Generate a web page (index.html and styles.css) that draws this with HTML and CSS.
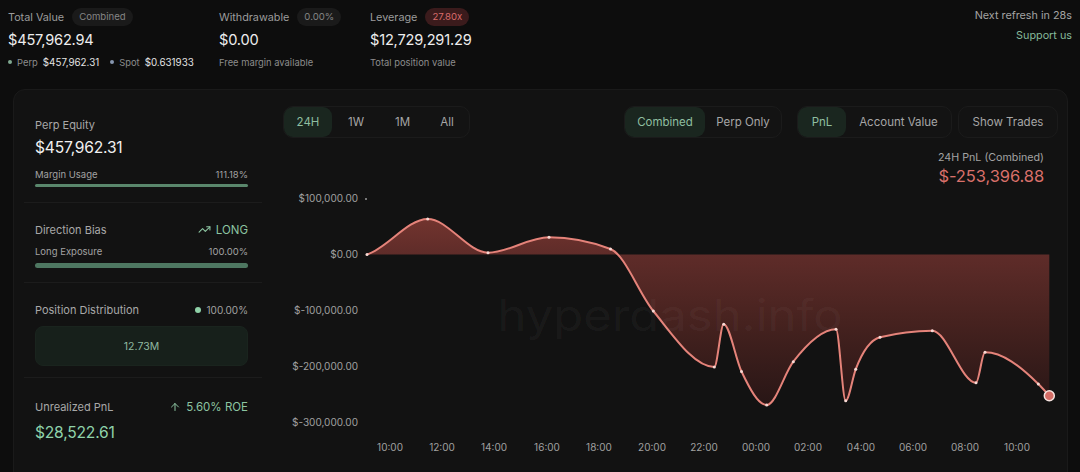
FILE: index.html
```html
<!DOCTYPE html>
<html lang="en">
<head>
<meta charset="utf-8">
<title>Hyperdash</title>
<link rel="stylesheet" href="styles.css">
</head>
<body>
<header class="top">
  <div class="stats">
    <div class="stat stat-total">
      <div class="stat-head"><span class="label">Total Value</span><span class="badge">Combined</span></div>
      <div class="value">$457,962.94</div>
      <div class="sub">
        <span class="dot dot-green"></span><span class="muted">Perp</span><span class="subval">$457,962.31</span>
        <span class="dot dot-blue"></span><span class="muted">Spot</span><span class="subval">$0.631933</span>
      </div>
    </div>
    <div class="stat stat-withdraw">
      <div class="stat-head"><span class="label">Withdrawable</span><span class="badge">0.00%</span></div>
      <div class="value">$0.00</div>
      <div class="sub"><span class="muted">Free margin available</span></div>
    </div>
    <div class="stat">
      <div class="stat-head"><span class="label">Leverage</span><span class="badge badge-red">27.80x</span></div>
      <div class="value">$12,729,291.29</div>
      <div class="sub"><span class="muted">Total position value</span></div>
    </div>
  </div>
  <div class="refresh">
    <div class="refresh-text">Next refresh in 28s</div>
    <div class="support">Support us</div>
  </div>
</header>

<main class="card">
  <aside class="side">
    <section class="sec sec-equity">
      <div class="row"><span class="sec-label">Perp Equity</span></div>
      <div class="big">$457,962.31</div>
      <div class="row small-row"><span>Margin Usage</span><span>111.18%</span></div>
      <div class="bar bar-thin"></div>
    </section>
    <section class="sec sec-bias">
      <div class="row"><span class="sec-label">Direction Bias</span>
        <span class="long">
          <svg class="ic" viewBox="0 0 24 24" width="13" height="13"><polyline points="22 7 13.5 15.5 8.5 10.5 2 17"/><polyline points="16 7 22 7 22 13"/></svg>
          LONG
        </span>
      </div>
      <div class="row small-row"><span>Long Exposure</span><span>100.00%</span></div>
      <div class="bar bar-thick"></div>
    </section>
    <section class="sec sec-dist">
      <div class="row"><span class="sec-label">Position Distribution</span>
        <span class="pct"><span class="pdot"></span>100.00%</span>
      </div>
      <div class="distbox">12.73M</div>
    </section>
    <section class="sec sec-upnl">
      <div class="row"><span class="sec-label">Unrealized PnL</span>
        <span class="roe">
          <svg class="ic" viewBox="0 0 24 24" width="12" height="12"><path d="M12 19V5"/><path d="M5 12l7-7 7 7"/></svg>
          5.60% ROE
        </span>
      </div>
      <div class="big green">$28,522.61</div>
    </section>
  </aside>

  <section class="chart-col">
    <div class="controls">
      <div class="seg">
        <span class="btn active b-24h">24H</span>
        <span class="btn b-1w">1W</span>
        <span class="btn b-1m">1M</span>
        <span class="btn b-all">All</span>
      </div>
      <div class="spacer"></div>
      <div class="seg">
        <span class="btn active b-comb">Combined</span>
        <span class="btn b-perp">Perp Only</span>
      </div>
      <div class="seg seg-mode">
        <span class="btn active b-pnl">PnL</span>
        <span class="btn b-acct">Account Value</span>
      </div>
      <div class="seg seg-trades">
        <span class="btn b-trades">Show Trades</span>
      </div>
    </div>
    <div class="pnl-head">
      <div class="pnl-label">24H PnL (Combined)</div>
      <div class="pnl-value">$-253,396.88</div>
    </div>
    <svg class="chart" width="775" height="283" viewBox="283 187 775 283">
      <defs>
        <linearGradient id="fillGrad" gradientUnits="userSpaceOnUse" x1="0" y1="215" x2="0" y2="410">
          <stop offset="0" stop-color="#74352f"/>
          <stop offset="0.2" stop-color="#5f2c29"/>
          <stop offset="0.55" stop-color="#46221f"/>
          <stop offset="1" stop-color="#261515"/>
        </linearGradient>
      </defs>
      <g class="ylabels">
        <text x="358" y="201.5">$100,000.00</text>
        <text x="358" y="257.5">$0.00</text>
        <text x="358" y="313.5">$-100,000.00</text>
        <text x="358" y="369.5">$-200,000.00</text>
        <text x="358" y="425.5">$-300,000.00</text>
      </g>
      <circle cx="366" cy="199" r="1" fill="#9a9a9a"/>
      <path class="area" d="M367,254.5 C387.2,248.4 407.5,219 427.7,219 C447.8,219 467.9,252.7 488,252.7 C508.3,252.7 528.7,237.3 549,237.3 C569.5,237.3 590,241.2 610.5,249 C624.8,254.4 639,293.4 653.3,311 C673.6,336 694,367 714.3,367 C717.4,367 720.6,324.3 723.7,324.3 C729.6,324.3 735.6,359 741.5,371.5 C749.9,389.1 758.3,405 766.7,405 C775.6,405 784.4,373.2 793.3,361.7 C807.5,343.3 821.8,329.3 836,329.3 C839.2,329.3 842.5,400.7 845.7,400.7 C849,400.7 852.4,378 855.7,369.3 C863.8,348.2 871.9,339.3 880,337.3 C897.4,332.9 914.9,330.7 932.3,330.7 C946.9,330.7 961.4,382.7 976,382.7 C979,382.7 982,352.3 985,352.3 C1002.8,352.3 1020.5,366.5 1038.3,384 C1042,387.6 1045.6,391.7 1049.3,395.7 L1049.3,254.5 L367,254.5 Z"/>
      <path class="line" d="M367,254.5 C387.2,248.4 407.5,219 427.7,219 C447.8,219 467.9,252.7 488,252.7 C508.3,252.7 528.7,237.3 549,237.3 C569.5,237.3 590,241.2 610.5,249 C624.8,254.4 639,293.4 653.3,311 C673.6,336 694,367 714.3,367 C717.4,367 720.6,324.3 723.7,324.3 C729.6,324.3 735.6,359 741.5,371.5 C749.9,389.1 758.3,405 766.7,405 C775.6,405 784.4,373.2 793.3,361.7 C807.5,343.3 821.8,329.3 836,329.3 C839.2,329.3 842.5,400.7 845.7,400.7 C849,400.7 852.4,378 855.7,369.3 C863.8,348.2 871.9,339.3 880,337.3 C897.4,332.9 914.9,330.7 932.3,330.7 C946.9,330.7 961.4,382.7 976,382.7 C979,382.7 982,352.3 985,352.3 C1002.8,352.3 1020.5,366.5 1038.3,384 C1042,387.6 1045.6,391.7 1049.3,395.7"/>
      <g class="pts">
        <circle cx="367" cy="254.5" r="1.5"/>
        <circle cx="427.7" cy="219" r="1.5"/>
        <circle cx="488" cy="252.7" r="1.5"/>
        <circle cx="549" cy="237.3" r="1.5"/>
        <circle cx="610.5" cy="249" r="1.5"/>
        <circle cx="653.3" cy="311" r="1.5"/>
        <circle cx="714.3" cy="367" r="1.5"/>
        <circle cx="723.7" cy="324.3" r="1.5"/>
        <circle cx="741.5" cy="371.5" r="1.5"/>
        <circle cx="766.7" cy="405" r="1.5"/>
        <circle cx="793.3" cy="361.7" r="1.5"/>
        <circle cx="836" cy="329.3" r="1.5"/>
        <circle cx="845.7" cy="400.7" r="1.5"/>
        <circle cx="855.7" cy="369.3" r="1.5"/>
        <circle cx="880" cy="337.3" r="1.5"/>
        <circle cx="932.3" cy="330.7" r="1.5"/>
        <circle cx="976" cy="382.7" r="1.5"/>
        <circle cx="985" cy="352.3" r="1.5"/>
        <circle cx="1038.3" cy="384" r="1.5"/>
      </g>
      <circle class="endpt" cx="1049.3" cy="395.7" r="5"/>
      <text class="wm" x="670" y="331" text-anchor="middle" textLength="345" lengthAdjust="spacingAndGlyphs">hyperdash.info</text>
      <g class="xlabels">
        <text x="390" y="450.5">10:00</text>
        <text x="442" y="450.5">12:00</text>
        <text x="494" y="450.5">14:00</text>
        <text x="547" y="450.5">16:00</text>
        <text x="599" y="450.5">18:00</text>
        <text x="652" y="450.5">20:00</text>
        <text x="704" y="450.5">22:00</text>
        <text x="756" y="450.5">00:00</text>
        <text x="808" y="450.5">02:00</text>
        <text x="861" y="450.5">04:00</text>
        <text x="913" y="450.5">06:00</text>
        <text x="965" y="450.5">08:00</text>
        <text x="1017" y="450.5">10:00</text>
      </g>
    </svg>
  </section>
</main>
</body>
</html>
```

FILE: styles.css
```css
* { box-sizing: border-box; }

html, body {
  margin: 0;
  width: 1080px;
  height: 472px;
  overflow: hidden;
  background: #0d0d0d;
  font-family: Inter, "Noto Sans", "Liberation Sans", sans-serif;
  color: #e9e9e9;
}

/* ---------- header ---------- */
.top {
  height: 89px;
  padding: 8px 8px 0 8px;
  display: flex;
  justify-content: space-between;
}

.stats { display: flex; }

.stat-total { width: 211px; }
.stat-withdraw { width: 151px; }

.stat-head {
  height: 18px;
  display: flex;
  align-items: center;
  gap: 8px;
}

.label {
  font-size: 10.8px;
  color: #9c9c9c;
}

.badge {
  height: 18px;
  line-height: 18px;
  padding: 0 7px;
  border-radius: 9px;
  background: #1a1a1a;
  color: #858585;
  font-size: 9.6px;
}

.badge-red {
  background: #3b1b1c;
  color: #d86b6b;
}

.value {
  margin-top: 3px;
  height: 22px;
  line-height: 22px;
  font-size: 14.6px;
  letter-spacing: -0.2px;
  color: #ededed;
}

.sub {
  margin-top: 4px;
  height: 14px;
  display: flex;
  align-items: center;
  font-size: 9.4px;
}

.muted { color: #8c8c8c; }

.subval {
  color: #e3e3e3;
  font-size: 9.8px;
  margin-left: 5px;
}

.dot {
  width: 4px;
  height: 4px;
  border-radius: 50%;
  margin-right: 5px;
}

.dot-green { background: #7fa890; }
.dot-blue { background: #8797b0; margin-left: 11px; }

.refresh {
  text-align: right;
  font-size: 10.8px;
}

.refresh-text {
  height: 16px;
  line-height: 16px;
  color: #a3a3a3;
}

.support {
  margin-top: 4px;
  height: 16px;
  line-height: 16px;
  color: #86b99a;
}

/* ---------- card ---------- */
.card {
  margin: 0 12px 0 13px;
  height: 400px;
  background: #121212;
  border: 1px solid #1a1a1a;
  border-radius: 12px;
  display: flex;
}

/* ---------- side panel ---------- */
.side {
  width: 238px;
  margin-left: 10px;
  padding-top: 8px;
  flex: none;
}

.sec {
  padding: 18px 14px 14px 11px;
  border-bottom: 1px solid #1c1c1c;
}

.sec-equity { padding-bottom: 15px; }
.sec-dist { padding-bottom: 11px; }
.sec-upnl { padding-top: 20px; border-bottom: none; }

.row {
  height: 17px;
  display: flex;
  justify-content: space-between;
  align-items: center;
}

.sec-label {
  font-size: 11px;
  color: #a8a8a8;
}

.big {
  margin-top: 4px;
  height: 22px;
  line-height: 22px;
  font-size: 15.6px;
  letter-spacing: -0.2px;
  color: #f0f0f0;
}

.big.green {
  margin-top: 7px;
  color: #8fd3aa;
}

.small-row {
  height: 14px;
  font-size: 9.5px;
  color: #a2a2a2;
}

.sec-equity .small-row { margin-top: 8px; }
.sec-bias .small-row { margin-top: 6px; }

.bar {
  background: #5a876c;
  border-radius: 3px;
}

.bar-thin {
  margin-top: 3px;
  height: 3px;
}

.bar-thick {
  margin-top: 5px;
  height: 5px;
  background: #4e7761;
}

.long, .roe {
  display: flex;
  align-items: center;
  gap: 5px;
  font-size: 11.5px;
  color: #8cc4a1;
}

.ic {
  fill: none;
  stroke: currentColor;
  stroke-width: 2;
  stroke-linecap: round;
  stroke-linejoin: round;
}

.pct {
  display: flex;
  align-items: center;
  gap: 6px;
  font-size: 10px;
  color: #a2a2a2;
}

.pdot {
  width: 6px;
  height: 6px;
  border-radius: 50%;
  background: #8fd1a8;
}

.distbox {
  margin-top: 8px;
  height: 40px;
  border-radius: 8px;
  background: #17201b;
  border: 1px solid #1a241e;
  display: flex;
  align-items: center;
  justify-content: center;
  font-size: 10.5px;
  color: #8fb8a0;
}

/* ---------- chart column ---------- */
.chart-col {
  flex: 1;
  margin-left: 21px;
  margin-right: 9px;
  padding-top: 16px;
  min-width: 0;
}

.controls {
  height: 32px;
  display: flex;
  align-items: stretch;
}

.spacer { flex: 1; }

.seg {
  display: flex;
  border: 1px solid #1b1b1b;
  border-radius: 10px;
  background: #131313;
}

.seg-mode { margin-left: 15px; }
.seg-trades { margin-left: 6px; }

.btn {
  height: 30px;
  line-height: 30px;
  border-radius: 9px;
  font-size: 11.5px;
  color: #a6a6a6;
  text-align: center;
}

.btn.active {
  background: #1a261f;
  color: #8fbfa0;
}

.b-24h { width: 48px; }
.b-1w { width: 48px; }
.b-1m { width: 45px; }
.b-all { width: 44px; }
.b-comb { width: 80px; }
.b-perp { width: 76px; }
.b-pnl { width: 48px; }
.b-acct { width: 105px; }
.b-trades { width: 98px; }

.pnl-head {
  margin-top: 12px;
  padding-right: 14px;
  text-align: right;
}

.pnl-label {
  height: 15px;
  line-height: 15px;
  font-size: 10.7px;
  color: #a3a3a3;
}

.pnl-value {
  height: 22px;
  line-height: 22px;
  font-size: 16.5px;
  letter-spacing: -0.1px;
  color: #d9706a;
}

.chart { display: block; }

.ylabels text {
  font-family: Inter, "Noto Sans", sans-serif;
  font-size: 10px;
  fill: #a0a0a0;
  text-anchor: end;
}

.xlabels text {
  font-family: Inter, "Noto Sans", sans-serif;
  font-size: 10px;
  fill: #a0a0a0;
  text-anchor: middle;
}

.area { fill: url(#fillGrad); }

.line {
  fill: none;
  stroke: #e5837a;
  stroke-width: 2;
  stroke-linejoin: round;
}

.pts circle { fill: #f7d9d4; }

.endpt {
  fill: #d46d66;
  stroke: #f6e3df;
  stroke-width: 1.5;
}

.wm {
  font-family: Inter, "Noto Sans", sans-serif;
  font-size: 44px;
  fill: rgba(255, 255, 255, 0.045);
}
```
